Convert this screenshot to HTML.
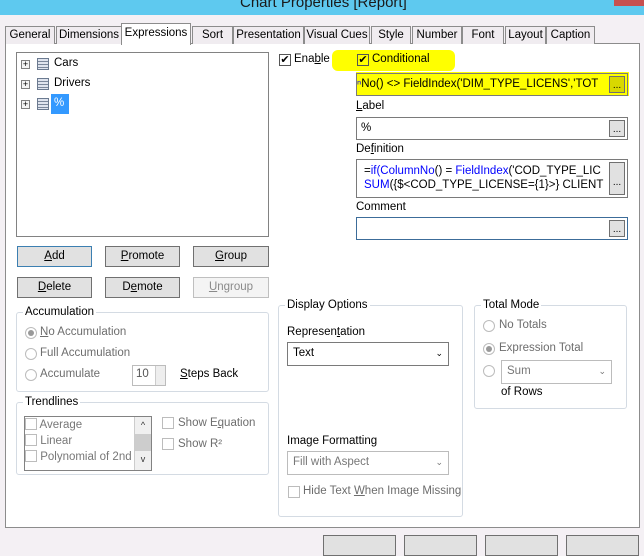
<!DOCTYPE html>
<html><head><style>
*{box-sizing:border-box;margin:0;padding:0}
body{width:644px;height:540px;overflow:hidden;background:#f4f0f4;font-family:"Liberation Sans",sans-serif;font-size:11.5px;color:#000;position:relative}
.a{position:absolute}
.title{left:0;top:0;width:644px;height:15px;background:#5ec9ef}
.tab{position:absolute;top:26px;height:18px;border:1px solid #8c8c8c;border-bottom:none;background:#f0ecf0;text-align:center;line-height:16px}
.panel{left:5px;top:43px;width:635px;height:485px;background:#fff;border:1px solid #8c8c8c}
.btn{position:absolute;height:21px;border:1px solid #707070;background:#e1e1e1;text-align:center;line-height:19px}
.grp{position:absolute;border:1px solid #d4dbe3;border-radius:3px}
.gl{position:absolute;top:-8px;left:6px;background:#fff;padding:0 2px;line-height:14px}
.rad{position:absolute;width:12px;height:12px;border:1px solid #bcbcbc;border-radius:50%;background:#fff}
.dis{color:#6d6d6d}
.cb{position:absolute;width:12px;height:12px;border:1px solid #bcbcbc;background:#fff}
.fld{position:absolute;border:1px solid #7a7a7a;background:#fff}
.dots{position:absolute;right:2px;top:2px;width:16px;height:17px;border:1px solid #707070;background:#e1e1e1;font-size:10px;text-align:center;line-height:18px}
.sel{position:absolute;border:1px solid #7a7a7a;background:#fff;line-height:20px;padding-left:5px}
.chev{position:absolute;right:5px;top:0;font-size:9px}
.pl{position:absolute;left:0;top:0;width:9px;height:9px;border:1px solid #808080;font-size:9px;line-height:7px;text-align:center;background:#f4f4f4}
.ic{position:absolute;left:16px;top:-2px;width:12px;height:12px;border:1px solid #6b7a90;background:repeating-linear-gradient(#dfe4ee 0 2px,#7b879b 2px 3px)}
u{text-decoration:underline}
</style></head><body>
<div class="a title"></div>
<div class="a" style="left:614px;top:0;width:30px;height:6px;background:#c75050"></div>
<div class="a" style="left:240px;top:-6px;font-size:15px;color:#1a1a1a">Chart Properties [Report]</div>

<div class="a panel"></div>
<div class="tab" style="left:5px;width:50px">General</div>
<div class="tab" style="left:56px;width:66px">Dimensions</div>
<div class="tab" style="left:192px;width:41px">Sort</div>
<div class="tab" style="left:233px;width:71px">Presentation</div>
<div class="tab" style="left:304px;width:66px">Visual Cues</div>
<div class="tab" style="left:371px;width:40px">Style</div>
<div class="tab" style="left:412px;width:50px">Number</div>
<div class="tab" style="left:462px;width:42px">Font</div>
<div class="tab" style="left:505px;width:41px">Layout</div>
<div class="tab" style="left:546px;width:49px">Caption</div>
<div class="tab" style="left:121px;top:23px;width:70px;height:22px;background:#fff;line-height:19px;border-bottom:none">Expressions</div>

<!-- tree -->
<div class="a" style="left:16px;top:52px;width:253px;height:185px;border:1px solid #828282;background:#fff"></div>
<div class="a" style="left:21px;top:60px;width:100px">
 <div style="position:relative;height:20px"><span class="pl">+</span><span class="ic"></span><span class="a" style="left:33px;top:-3px">Cars</span></div>
 <div style="position:relative;height:20px"><span class="pl">+</span><span class="ic"></span><span class="a" style="left:33px;top:-3px">Drivers</span></div>
 <div style="position:relative;height:20px"><span class="pl">+</span><span class="ic"></span><span class="a" style="left:30px;top:-6px;width:18px;height:20px;background:#3399ff;color:#fff;padding:3px 0 0 3px">%</span></div>
</div>

<!-- right top -->
<div class="cb" style="left:279px;top:54px;border-color:#555;font-size:11px;line-height:10px;text-align:center">✔</div>
<div class="a" style="left:294px;top:53px">Ena<u>b</u>le</div>
<div class="a" style="left:332px;top:50px;width:123px;height:21px;background:#ffff00;border-radius:6px"></div>
<div class="a" style="left:356px;top:72px;width:273px;height:24px;background:#ffff00"></div>
<div class="cb" style="left:357px;top:54px;border-color:#555;background:#ffff00;font-size:11px;line-height:10px;text-align:center">✔</div>
<div class="a" style="left:372px;top:53px">Conditional</div>
<div class="fld" style="left:356px;top:73px;width:272px;height:23px;background:transparent;overflow:hidden;white-space:nowrap;line-height:21px"><span style="color:#00f">ⁿ</span>No() &lt;&gt; FieldIndex('DIM_TYPE_LICENS','TOT<div class="dots" style="background:#d8d800">...</div></div>
<div class="a" style="left:356px;top:100px"><u>L</u>abel</div>
<div class="fld" style="left:356px;top:117px;width:272px;height:23px;line-height:21px;padding-left:4px">%<div class="dots">...</div></div>
<div class="a" style="left:356px;top:143px">De<u>f</u>inition</div>
<div class="fld" style="left:356px;top:159px;width:272px;height:39px;line-height:14px;padding:4px 0 0 7px;overflow:hidden;white-space:nowrap">=<span style="color:#00f">if(ColumnNo</span>() = <span style="color:#00f">FieldIndex</span>('COD_TYPE_LIC<br><span style="color:#00f">SUM</span>({$&lt;COD_TYPE_LICENSE={1}&gt;} CLIENT<div class="dots" style="height:33px;line-height:40px">...</div></div>
<div class="a" style="left:356px;top:201px">Comment</div>
<div class="fld" style="left:356px;top:217px;width:272px;height:23px;border-color:#3c6c99"><div class="dots">...</div></div>

<!-- buttons -->
<div class="btn" style="left:17px;top:246px;width:75px;border-color:#3c7fb1"><u>A</u>dd</div>
<div class="btn" style="left:105px;top:246px;width:75px"><u>P</u>romote</div>
<div class="btn" style="left:193px;top:246px;width:76px"><u>G</u>roup</div>
<div class="btn" style="left:17px;top:277px;width:75px"><u>D</u>elete</div>
<div class="btn" style="left:105px;top:277px;width:75px">D<u>e</u>mote</div>
<div class="btn dis" style="left:193px;top:277px;width:76px;border-color:#bfbfbf;background:#f4f4f4;color:#8a8a8a"><u>U</u>ngroup</div>

<!-- accumulation -->
<div class="grp" style="left:16px;top:312px;width:253px;height:80px"><div class="gl">Accumulation</div></div>
<div class="rad" style="left:25px;top:327px"><div class="a" style="left:2px;top:2px;width:6px;height:6px;border-radius:50%;background:#999"></div></div>
<div class="a dis" style="left:40px;top:326px"><u>N</u>o Accumulation</div>
<div class="rad" style="left:25px;top:348px"></div>
<div class="a dis" style="left:40px;top:347px">Full Accumulation</div>
<div class="rad" style="left:25px;top:369px"></div>
<div class="a dis" style="left:40px;top:368px">Accumulate</div>
<div class="a" style="left:132px;top:365px;width:34px;height:21px;border:1px solid #bcbcbc;color:#555;padding:2px 3px">10</div>
<div class="a" style="left:155px;top:366px;width:10px;height:19px;background:#eee;border-left:1px solid #ccc"></div>
<div class="a" style="left:180px;top:368px"><u>S</u>teps Back</div>

<!-- trendlines -->
<div class="grp" style="left:16px;top:402px;width:253px;height:73px"><div class="gl">Trendlines</div></div>
<div class="a" style="left:24px;top:416px;width:128px;height:55px;border:1px solid #828282;overflow:hidden;line-height:16px;color:#777">
 <div><span class="cb" style="position:relative;display:inline-block;vertical-align:-2px"></span> Average</div>
 <div><span class="cb" style="position:relative;display:inline-block;vertical-align:-2px"></span> Linear</div>
 <div><span class="cb" style="position:relative;display:inline-block;vertical-align:-2px"></span> Polynomial of 2nd d</div>
 <div class="a" style="right:0;top:0;width:17px;height:53px;background:#f0f0f0;border-left:1px solid #ccc"><div style="height:17px;text-align:center;font-size:9px;color:#333">^</div><div style="height:17px;background:#cdcdcd"></div><div style="text-align:center;font-size:9px;color:#333">v</div></div>
</div>
<div class="cb" style="left:162px;top:417px"></div><div class="a dis" style="left:178px;top:417px">Show E<u>q</u>uation</div>
<div class="cb" style="left:162px;top:438px"></div><div class="a dis" style="left:178px;top:438px">Show R²</div>

<!-- display options -->
<div class="grp" style="left:278px;top:305px;width:185px;height:212px"><div class="gl">Display Options</div></div>
<div class="a" style="left:287px;top:326px">Represen<u>t</u>ation</div>
<div class="sel" style="left:287px;top:342px;width:162px;height:24px">Text<span class="chev">&#x2304;</span></div>
<div class="a" style="left:287px;top:435px">Image Formatting</div>
<div class="sel dis" style="left:287px;top:451px;width:162px;height:24px;border-color:#bcbcbc;color:#777">Fill with Aspect<span class="chev">&#x2304;</span></div>
<div class="cb" style="left:288px;top:486px"></div><div class="a dis" style="left:303px;top:485px">Hide Text <u>W</u>hen Image Missing</div>

<!-- total mode -->
<div class="grp" style="left:474px;top:305px;width:153px;height:104px"><div class="gl">Total Mode</div></div>
<div class="rad" style="left:483px;top:320px"></div><div class="a dis" style="left:499px;top:319px">No Totals</div>
<div class="rad" style="left:483px;top:343px"><div class="a" style="left:2px;top:2px;width:6px;height:6px;border-radius:50%;background:#999"></div></div><div class="a dis" style="left:499px;top:342px">Expression Total</div>
<div class="rad" style="left:483px;top:365px"></div>
<div class="sel dis" style="left:501px;top:360px;width:111px;height:24px;border-color:#bcbcbc;color:#777">Sum<span class="chev">&#x2304;</span></div>
<div class="a" style="left:501px;top:386px">of Rows</div>

<!-- bottom buttons -->
<div class="btn" style="left:323px;top:535px;width:73px"></div>
<div class="btn" style="left:404px;top:535px;width:73px"></div>
<div class="btn" style="left:485px;top:535px;width:73px"></div>
<div class="btn" style="left:566px;top:535px;width:73px"></div>
</body></html>
